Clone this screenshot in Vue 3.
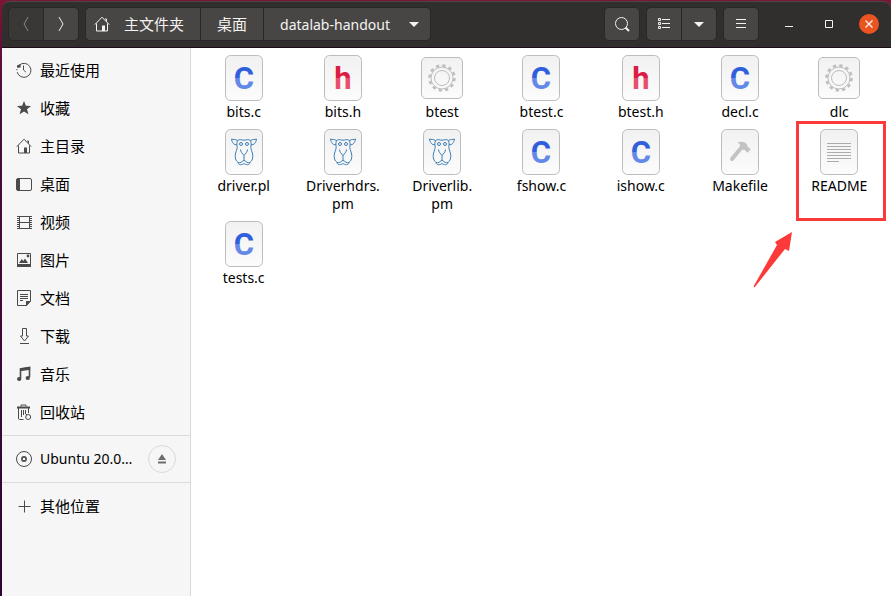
<script setup>
import { ref } from 'vue'

const HOME = '<path d="M.8 8.6 8 1.2l7.2 7.4M12.5 5.5V3h-1.5M2.5 7.5v7.5h11V7.5"/><path d="M8 9.5h3V15H8z" class="solid"/>'

const ICONS = {
  recent: '<path d="M3.2 3.2A7 7 0 1 1 1.2 10.2M.9 8.2V7M7.5 3.5V8l2.3 2"/><path d="M1 3.4 4.6 2v3.6L1 5.8z" class="solid"/>',
  star: '<path d="m8 1 1.9 4.8 5.1.3-4 3.2 1.4 5L8 11.5l-4.4 2.8 1.4-5-4-3.2 5.1-.3z" class="solid"/>',
  home: HOME,
  desktop: '<rect x=".5" y="2.5" width="15" height="12" rx="1.5"/><path d="M1 2.5h3v12H1z" class="solid"/>',
  video: '<path d="M3.5 2v13M13.5 2v13M3.5 2.5h10M3.5 8.5h10M3.5 14.5h10"/><path d="M2 2v13M15 2v13" stroke-width="2" stroke-dasharray="1 1"/>',
  image: '<path d="M1.5 1.5h13v12h-13z"/><path d="M1 12h14v3H1zM3 11l2.8-4 1.6 2L9 6.5l3 4.5z" class="solid"/><circle cx="12" cy="4" r="1.4" class="solid"/>',
  doc: '<path d="M1.5.5h13v10.5l-4 4.5h-9zM4 4.5h8M4 6.5h8M4 8.5h8M4 10.5h3"/><path d="M10 11h5l-4.5 5H10z" class="solid"/>',
  download: '<path d="M6.5.5h4V8h2l-4 5-4-5h2zM4 15.5h9"/>',
  music: '<path d="M4.5 12V3l9-1.5V11" stroke-width="1.6"/><path d="M4 2.5 14.2.8v3L4 5.3z" class="solid"/><ellipse cx="3.2" cy="13" rx="2.2" ry="1.9" class="solid"/><ellipse cx="11.8" cy="12" rx="2.2" ry="1.9" class="solid"/>',
  trash: '<path d="M1 3.5h13" stroke-width="2"/><path d="M5 2.5V1h5v1.5M2.5 4v10.5q0 1 1 1h4M12.5 4v5M5.5 6v7M7.5 6v5M9.5 6v3"/><path d="m9 9 2 2"/><circle cx="12.2" cy="13" r="2.5"/>',
  disc: '<circle cx="8" cy="8" r="7.5"/><circle cx="8" cy="8" r="2.1" stroke-width="1.6"/>',
  plus: '<path d="M8.5 2.5v12M2.5 8.5h12"/>',
}

const places = [
  { id: 'recent', label: '最近使用' },
  { id: 'star', label: '收藏' },
  { id: 'home', label: '主目录' },
  { id: 'desktop', label: '桌面' },
  { id: 'video', label: '视频' },
  { id: 'image', label: '图片' },
  { id: 'doc', label: '文档' },
  { id: 'download', label: '下载' },
  { id: 'music', label: '音乐' },
  { id: 'trash', label: '回收站' },
]

const files = [
  { name: 'bits.c', type: 'c' },
  { name: 'bits.h', type: 'h' },
  { name: 'btest', type: 'exec' },
  { name: 'btest.c', type: 'c' },
  { name: 'btest.h', type: 'h' },
  { name: 'decl.c', type: 'c' },
  { name: 'dlc', type: 'exec' },
  { name: 'driver.pl', type: 'perl' },
  { name: 'Driverhdrs.\npm', type: 'perl' },
  { name: 'Driverlib.\npm', type: 'perl' },
  { name: 'fshow.c', type: 'c' },
  { name: 'ishow.c', type: 'c' },
  { name: 'Makefile', type: 'make' },
  { name: 'README', type: 'text' },
  { name: 'tests.c', type: 'c' },
]

const marked = ref('README')
</script>

<template>
  <div class="window">
    <svg class="defs" width="0" height="0" aria-hidden="true">
      <defs>
        <linearGradient id="paper" x1="0" y1="0" x2="0" y2="1">
          <stop offset="0" stop-color="#f1f1f1" />
          <stop offset="1" stop-color="#fcfcfc" />
        </linearGradient>
        <linearGradient id="blue" x1="0" y1="0" x2="0" y2="46" gradientUnits="userSpaceOnUse">
          <stop offset="0.5" stop-color="#2f5fdd" />
          <stop offset="0.5" stop-color="#6289e8" />
        </linearGradient>
        <linearGradient id="red" x1="0" y1="0" x2="0" y2="46" gradientUnits="userSpaceOnUse">
          <stop offset="0.5" stop-color="#dc1d42" />
          <stop offset="0.5" stop-color="#e7506d" />
        </linearGradient>
      </defs>
    </svg>

    <header class="titlebar">
      <div class="group">
        <button class="btn disabled" disabled aria-label="后退">
          <svg width="16" height="16" viewBox="0 0 16 16"><path d="M10 1 6 8l4 7" /></svg>
        </button>
        <button class="btn" aria-label="前进">
          <svg width="16" height="16" viewBox="0 0 16 16"><path d="m6 1 4 7-4 7" /></svg>
        </button>
      </div>
      <nav class="group">
        <button class="btn crumb root">
          <svg width="16" height="16" viewBox="0 0 16 16" v-html="HOME"></svg>
          <span>主文件夹</span>
        </button>
        <button class="btn crumb"><span>桌面</span></button>
        <button class="btn crumb current">
          datalab-handout
          <svg width="16" height="16" viewBox="0 0 16 16"><path d="M3 6h10l-5 5z" class="solid" /></svg>
        </button>
      </nav>
      <div class="actions">
        <button class="btn single" aria-label="搜索">
          <svg width="16" height="16" viewBox="0 0 16 16">
            <circle cx="7.5" cy="7.5" r="6" /><path d="m11.5 11.5 3.5 3.5" stroke-width="2" />
          </svg>
        </button>
        <div class="group">
          <button class="btn" aria-label="列表视图">
            <svg width="16" height="16" viewBox="0 0 16 16">
              <path d="M2.5 2.5h2v2h-2zM2.5 6.5h2v2h-2zM2.5 10.5h2v2h-2zM6 3.5h8M6 7.5h8M6 11.5h8" />
            </svg>
          </button>
          <button class="btn" aria-label="视图选项">
            <svg width="16" height="16" viewBox="0 0 16 16"><path d="M3 6h10l-5 5z" class="solid" /></svg>
          </button>
        </div>
        <button class="btn single" aria-label="菜单">
          <svg width="16" height="16" viewBox="0 0 16 16"><path d="M3 3.5h10M3 7.5h10M3 11.5h10" /></svg>
        </button>
      </div>
      <div class="controls">
        <button class="control" aria-label="最小化">
          <svg width="16" height="16" viewBox="0 0 16 16"><path d="M4 10.5h8" /></svg>
        </button>
        <button class="control" aria-label="最大化">
          <svg width="16" height="16" viewBox="0 0 16 16"><path d="M4.5 4.5h7v7h-7z" /></svg>
        </button>
        <button class="control close" aria-label="关闭">
          <svg width="16" height="16" viewBox="0 0 16 16"><path d="m4.5 4.5 7 7M11.5 4.5l-7 7" stroke-width="1.3" /></svg>
        </button>
      </div>
    </header>

    <div class="body">
      <aside class="sidebar">
        <nav class="places">
          <a v-for="p in places" :key="p.id" class="place" href="#">
            <svg width="16" height="16" viewBox="0 0 16 16" v-html="ICONS[p.id]"></svg>
            <span>{{ p.label }}</span>
          </a>
        </nav>
        <div class="volume">
          <a class="place" href="#">
            <svg width="16" height="16" viewBox="0 0 16 16" v-html="ICONS.disc"></svg>
            <span>Ubuntu 20.0…</span>
          </a>
          <button class="eject" aria-label="弹出">
            <svg width="16" height="16" viewBox="0 0 16 16"><path d="m8 3 4 6H4zM4 10.5h8v2H4z" class="solid" /></svg>
          </button>
        </div>
        <nav class="places other">
          <a class="place" href="#">
            <svg width="16" height="16" viewBox="0 0 16 16" v-html="ICONS.plus"></svg>
            <span>其他位置</span>
          </a>
        </nav>
      </aside>

      <main class="files">
        <button v-for="f in files" :key="f.name" class="file">
          <svg class="thumb" width="42" height="46" viewBox="-2 0 42 46">
            <rect v-if="f.type === 'exec'" x="-1.5" y="2.5" width="41" height="41" rx="4.5" class="sheet" />
            <rect v-else x=".5" y=".5" width="37" height="45" rx="5" class="sheet" />

            <text v-if="f.type === 'c'" x="19" y="34" class="letter" fill="url(#blue)">C</text>
            <text v-else-if="f.type === 'h'" x="19" y="34" class="letter" fill="url(#red)">h</text>
            <g v-else-if="f.type === 'exec'" class="gear">
              <circle cx="19" cy="23" r="12.5" stroke-width="2.5" stroke-dasharray="3.27 3.27" />
              <circle cx="19" cy="23" r="11" />
              <circle cx="19" cy="23" r="7.5" />
            </g>
            <g v-else-if="f.type === 'perl'" class="camel">
              <path d="M12.5 11.5C10 9.8 8.5 11 6.5 10c.5 3.5 2.5 6.5 5.5 5.5M25.5 11.5C28 9.8 29.5 11 31.5 10c-.5 3.5-2.5 6.5-5.5 5.5" />
              <path d="M12.5 11.5c2.5-1.8 4-.3 6.5-.3s4-1.5 6.5.3c1 2.500.5 5 .3 7 .4 3 2.200 5.500 2 9-.2 3.700-1.800 6-4.300 6.300M12.500 11.500c-1 2.500-.5 5-.3 7-.4 3-2.200 5.500-2 9 .2 3.700 1.800 6 4.300 6.300" />
              <path d="M15.5 20.5c0 2.5 2 4 3.5 6 1.5-2 3.5-3.5 3.5-6M19 26.500v5M19 31.500c-1.500 0-2 2-4.500 2.300M19 31.500c1.500 0 2 2 4.500 2.300M13 33.500c.5 3 4 2.500 6 1 2 1.500 5.500 2 6-1" />
              <circle cx="16" cy="15" r="1.5" />
              <circle cx="22" cy="15" r="1.5" />
            </g>
            <g v-else-if="f.type === 'make'" class="hammer">
              <path d="M20.5 18.5 11 30" />
              <path d="M16.5 13.5c4-1.5 7.5-1 9.5 2l.5 2 3.300 2.700-3.300 3.600-3-3h-2l-3-2.500c1.500-2.500 0-3.500-2-4.800z" class="head" />
            </g>
            <path v-else d="M7 14.5h24M7 17.5h24M7 20.5h24M7 23.5h24M7 26.5h24M7 29.5h24M7 32.5h12" class="lines" />
          </svg>
          <span class="name">{{ f.name }}</span>
          <span v-if="f.name === marked" class="mark"></span>
          <svg v-if="f.name === marked" class="arrow" width="40" height="56" viewBox="0 0 40 56">
            <path d="M39 0 22 10l2 3L.5 54.500l1 1L32 17l4 2z" />
          </svg>
        </button>
      </main>
    </div>
  </div>
</template>

<style>
body {
  margin: 0;
  background: #2c001e;
}
</style>

<style scoped>
.window {
  display: flex;
  flex-direction: column;
  min-height: 100vh;
  box-sizing: border-box;
  padding: 1px 0 0 2px;
  background: linear-gradient(#7d1535, #4b0b3a 100px, #2f0430);
  font-family: "Noto Sans", "Noto Sans CJK SC", sans-serif;
  font-size: 14px;
  color: #000;
}

.defs {
  position: absolute;
}

svg {
  flex: none;
  fill: none;
  stroke: currentColor;
}

svg :deep(.solid) {
  fill: currentColor;
  stroke: none;
}

button {
  margin: 0;
  font: inherit;
  color: inherit;
}

.titlebar {
  display: flex;
  align-items: center;
  gap: 6px;
  height: 47px;
  box-sizing: border-box;
  padding: 0 12px 1px 6px;
  background: #312e2e;
  border-top: 1px solid #4b4747;
  border-bottom: 1px solid #1c0d18;
  border-radius: 8px 8px 0 0;
  color: #f4f3f2;
}

.group {
  display: flex;
}

.btn {
  display: flex;
  align-items: center;
  justify-content: center;
  width: 36px;
  height: 34px;
  padding: 0;
  background: #484644;
  border: 1px solid #292727;
}

.group .btn + .btn {
  margin-left: -1px;
}

.group .btn:first-child {
  border-radius: 5px 0 0 5px;
}

.group .btn:last-child {
  border-radius: 0 5px 5px 0;
}

.btn.single {
  border-radius: 5px;
}

.btn.disabled {
  background: #3a3837;
  color: #888583;
}

.btn.crumb {
  width: auto;
  padding: 0 16px;
}

.crumb span {
  padding-bottom: 2px;
  font-size: 15px;
}

.btn.root {
  gap: 14px;
  padding-left: 8px;
}

.btn.current {
  gap: 16px;
  padding-right: 8px;
}

.actions {
  display: flex;
  gap: 6px;
  margin-left: auto;
}

.controls {
  display: flex;
  gap: 20px;
  margin-left: 14px;
}

.control {
  display: flex;
  align-items: center;
  justify-content: center;
  width: 20px;
  height: 20px;
  padding: 0;
  background: none;
  border: none;
  border-radius: 50%;
}

.control.close {
  background: #e95420;
}

.body {
  flex: 1;
  display: flex;
  background: #fff;
}

.sidebar {
  width: 188px;
  flex: none;
  background: #f6f6f6;
  border-right: 1px solid #d9d9d9;
}

.places {
  padding: 3px 0 4px;
}

.places.other {
  padding-top: 4px;
}

.place {
  display: flex;
  align-items: center;
  gap: 8px;
  height: 38px;
  padding-left: 14px;
  color: #4a4a4a;
  text-decoration: none;
}

.place span {
  padding-bottom: 2px;
  font-size: 15px;
  color: #000;
}

.volume {
  display: flex;
  align-items: center;
  justify-content: space-between;
  height: 46px;
  padding-right: 14px;
  border-top: 1px solid #dcdcdc;
  border-bottom: 1px solid #dcdcdc;
}

.volume .place span {
  font-size: 14px;
}

.eject {
  display: flex;
  align-items: center;
  justify-content: center;
  width: 28px;
  height: 28px;
  padding: 0;
  background: none;
  border: 1px solid #dadada;
  border-radius: 50%;
  color: #6d6d6d;
}

.files {
  flex: 1;
  display: grid;
  grid-template-columns: repeat(auto-fill, minmax(96px, 1fr));
  align-content: start;
  row-gap: 8px;
  padding: 7px 2px 7px 3px;
}

.file {
  position: relative;
  display: flex;
  flex-direction: column;
  align-items: center;
  justify-content: flex-start;
  gap: 2px;
  padding: 0;
  background: none;
  border: none;
}

.name {
  line-height: 18px;
  text-align: center;
  white-space: pre-line;
}

.sheet {
  fill: url(#paper);
  stroke: #bcbcbc;
}

.letter {
  font-family: Roboto, sans-serif;
  font-size: 31px;
  font-weight: 700;
  text-anchor: middle;
  stroke: none;
}

.gear {
  stroke: #bdbdbd;
}

.camel {
  stroke: #3d7fb5;
}

.hammer {
  stroke: #c3c3c3;
  stroke-width: 4;
  stroke-linecap: round;
}

.hammer .head {
  fill: #c3c3c3;
  stroke: none;
}

.lines {
  stroke: #ababab;
}

/* highlight drawn over the file and its surroundings */
.mark {
  position: absolute;
  top: -8px;
  left: 6px;
  right: 3px;
  height: 100px;
  box-sizing: border-box;
  border: 3px solid #fd3a3a;
}

.arrow {
  position: absolute;
  top: 103px;
  left: -37px;
}

.arrow path {
  fill: #fd3a3a;
  stroke: none;
}
</style>
